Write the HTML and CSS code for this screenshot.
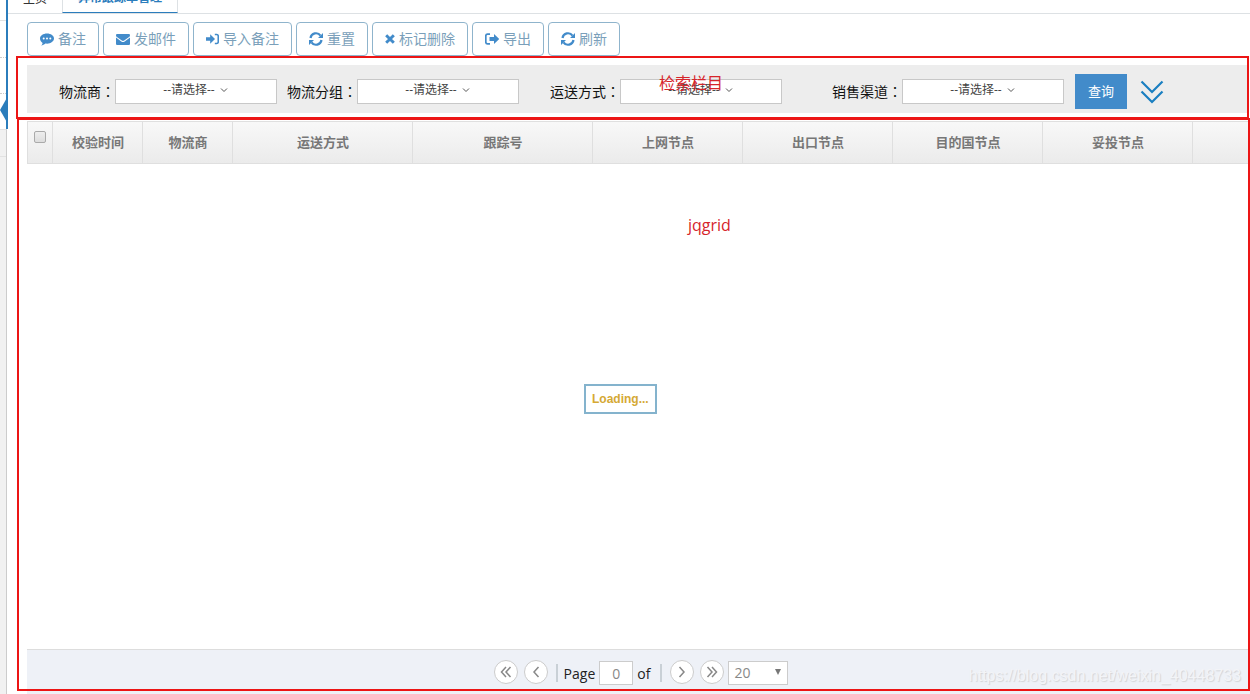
FILE: index.html
```html
<!DOCTYPE html>
<html lang="zh-CN">
<head>
<meta charset="utf-8">
<title>异常跟踪单管理</title>
<link rel="stylesheet" href="styles.css">
</head>
<body>
<aside class="sidebar">
  <div class="side-active">
    <div class="side-row"></div>
    <div class="side-row dotted"></div>
    <div class="side-row dotted"></div>
    <svg class="side-arrow" width="8" height="28" viewBox="0 0 8 28"><path d="M8 0L0 14l8 14z" fill="#2b7dbc"/></svg>
  </div>
  <div class="side-rest"><div class="side-row"></div></div>
</aside>
<main class="main">
  <nav class="tabs">
    <a class="tab" href="#">主页</a>
    <a class="tab active" href="#">异常跟踪单管理</a>
  </nav>
  <div class="toolbar">
    <button class="tool"><svg width="14" height="14" viewBox="0 0 14 14"><path fill="currentColor" d="M7 1.500c3.900 0 7 2.300 7 5.100s-3.100 5.100-7 5.100c-.6 0-1.100 0-1.600-.1C4.200 12.700 2.800 13.400 1.200 13.600c.8-.8 1.300-1.600 1.400-2.700C1 9.900 0 8.400 0 6.600 0 3.800 3.100 1.500 7 1.500z"/><g fill="#fff"><circle cx="3.700" cy="6.600" r="1"/><circle cx="7" cy="6.600" r="1"/><circle cx="10.300" cy="6.600" r="1"/></g></svg><span>备注</span></button>
    <button class="tool"><svg width="14" height="14" viewBox="0 0 14 14"><path fill="currentColor" d="M0 3.200C0 2.500.6 2 1.300 2h11.400c.7 0 1.300.5 1.300 1.200 0 .9-.6 1.600-1.300 2.100L8.200 8.500c-.8.5-1.600.5-2.400 0L1.300 5.300C.6 4.800 0 4.100 0 3.200zM0 5.500l5.300 3.900c1.100.7 2.300.7 3.400 0L14 5.500v6.200c0 .7-.6 1.300-1.300 1.300H1.300C.6 13 0 12.400 0 11.700z"/></svg><span>发邮件</span></button>
    <button class="tool"><svg width="13" height="14" viewBox="0 0 14 14"><path fill="currentColor" d="M0 5h4.500V2l5.200 5-5.200 5V9H0z"/><path fill="none" stroke="currentColor" stroke-width="1.700" d="M9.500 2.200h2c1 0 1.700.7 1.700 1.700v6.200c0 1-.7 1.700-1.700 1.700h-2"/></svg><span>导入备注</span></button>
    <button class="tool"><svg width="14" height="14" viewBox="0 0 14 14"><g fill="none" stroke="currentColor" stroke-width="2.200"><path d="M1.500 6A5.500 5.500 0 0 1 11.500 3.700M12.500 8A5.500 5.500 0 0 1 2.500 10.300"/></g><path fill="currentColor" d="M14 1v5H9zM0 13V8h5z"/></svg><span>重置</span></button>
    <button class="tool"><svg width="10" height="14" viewBox="0 1 11 12"><path fill="none" stroke="currentColor" stroke-width="3.200" d="M1.300 2.800l8.400 8.400M9.700 2.800l-8.400 8.400"/></svg><span>标记删除</span></button>
    <button class="tool"><svg width="14" height="14" viewBox="0 0 14 14"><path fill="currentColor" d="M4.500 5H9V2l5.200 5L9 12V9H4.500z"/><path fill="none" stroke="currentColor" stroke-width="1.700" d="M5 2.200H2.500C1.500 2.200.8 2.900.8 3.900v6.200c0 1 .7 1.700 1.700 1.700H5"/></svg><span>导出</span></button>
    <button class="tool"><svg width="14" height="14" viewBox="0 0 14 14"><g fill="none" stroke="currentColor" stroke-width="2.200"><path d="M1.500 6A5.500 5.500 0 0 1 11.500 3.700M12.500 8A5.500 5.500 0 0 1 2.500 10.300"/></g><path fill="currentColor" d="M14 1v5H9zM0 13V8h5z"/></svg><span>刷新</span></button>
  </div>
  <form class="filters">
    <div class="field">
      <label for="carrier">物流商<span class="colon" lang="zh-TW">：</span></label>
      <div class="pick"><select id="carrier"><option>--请选择--</option></select><svg class="caret" width="8" height="5" viewBox="0 0 8 5"><path d="M1 .5l3 3 3-3"/></svg></div>
    </div>
    <div class="field">
      <label for="group">物流分组<span class="colon" lang="zh-TW">：</span></label>
      <div class="pick"><select id="group"><option>--请选择--</option></select><svg class="caret" width="8" height="5" viewBox="0 0 8 5"><path d="M1 .5l3 3 3-3"/></svg></div>
    </div>
    <div class="field method">
      <label for="method">运送方式<span class="colon" lang="zh-TW">：</span></label>
      <div class="pick"><select id="method"><option>--请选择--</option></select><svg class="caret" width="8" height="5" viewBox="0 0 8 5"><path d="M1 .5l3 3 3-3"/></svg></div>
    </div>
    <div class="field channel">
      <label for="channel">销售渠道<span class="colon" lang="zh-TW">：</span></label>
      <div class="pick"><select id="channel"><option>--请选择--</option></select><svg class="caret" width="8" height="5" viewBox="0 0 8 5"><path d="M1 .5l3 3 3-3"/></svg></div>
    </div>
    <button class="query" type="button">查询</button>
    <button class="more" type="button" aria-label="展开"><svg width="24" height="24" viewBox="0 0 24 24"><path fill="none" stroke="#1a7fc1" stroke-width="2.200" d="M1.500 1.500L12 12 22.500 1.500M1.500 11.500L12 22l10.500-10.500"/></svg></button>
  </form>
  <section class="grid">
    <table class="head">
      <colgroup><col class="c-check"><col class="c-s"><col class="c-s"><col class="c-l"><col class="c-l"><col class="c-m"><col class="c-m"><col class="c-m"><col class="c-m"><col></colgroup>
      <thead><tr>
        <th class="check"><input type="checkbox" aria-label="全选"></th>
        <th>校验时间</th><th>物流商</th><th>运送方式</th><th>跟踪号</th><th>上网节点</th><th>出口节点</th><th>目的国节点</th><th>妥投节点</th><th></th>
      </tr></thead>
    </table>
    <div class="rows"></div>
    <div class="loading">Loading...</div>
    <footer class="pager">
      <div class="pages">
        <button class="round" aria-label="First"><svg width="12" height="12" viewBox="0 0 12 12"><path d="M6 1L1.500 6 6 11M10.500 1L6 6l4.500 5"/></svg></button>
        <button class="round" aria-label="Previous"><svg width="12" height="12" viewBox="0 0 12 12"><path d="M8.500 1L4 6l4.500 5"/></svg></button>
        <span class="sep"></span>
        <label for="page">Page</label>
        <input id="page" class="page" type="text" value="0">
        <span class="of">of</span>
        <span class="sep"></span>
        <button class="round" aria-label="Next"><svg width="12" height="12" viewBox="0 0 12 12"><path d="M3.500 1L8 6l-4.500 5"/></svg></button>
        <button class="round" aria-label="Last"><svg width="12" height="12" viewBox="0 0 12 12"><path d="M1.500 1L6 6l-4.500 5M6 1l4.500 5L6 11"/></svg></button>
        <div class="size"><select aria-label="Rows"><option>20</option></select><svg width="6" height="6" viewBox="0 0 6 6"><path d="M0 0h6L3 6z" fill="#777"/></svg></div>
      </div>
    </footer>
  </section>
</main>
<div class="mark mark-search"><span>检索栏目</span></div>
<div class="mark mark-grid"><span>jqgrid</span></div>
<div class="watermark">https://blog.csdn.net/weixin_40448733</div>
</body>
</html>
```
FILE: styles.css
```css
* { box-sizing: border-box; }
body {
  margin: 0;
  height: 100vh;
  display: flex;
  position: relative;
  overflow: hidden;
  background: #fff;
  color: #222;
  font: 14px/20px "Open Sans", "Noto Sans CJK SC", sans-serif;
}
button, input, select { font: inherit; margin: 0; }
svg { display: block; }

.sidebar { width: 8px; flex: none; display: flex; flex-direction: column; }
.side-active { height: 129px; border-right: 2px solid #2b7dbc; position: relative; padding-bottom: 35px; display: flex; flex-direction: column; }
.side-active .side-row { height: 21px; border-bottom: 1px solid #e2e2e2; }
.side-active .dotted { flex: 1; border-bottom: 1px dotted #ccc; }
.side-arrow { position: absolute; left: 0; top: 96px; }
.side-rest { flex: 1; width: 7px; background: #f1f1f1; border-right: 1px solid #ccc; border-top: 1px solid #e2e2e2; }
.side-rest .side-row { height: 27px; border-bottom: 1px solid #e2e2e2; }

.main { flex: 1; min-width: 0; display: flex; flex-direction: column; }
.tabs { height: 14px; border-bottom: 1px solid #dde1e4; display: flex; align-items: flex-end; overflow: hidden; }
.tab { flex: none; padding: 0 15px 4px; font-size: 12px; line-height: 20px; color: #333; text-decoration: none; }
.tab.active { color: #2b7dbc; font-weight: bold; border: 1px solid #dde1e4; border-bottom: 1px solid #2b7dbc; }

.toolbar { display: flex; gap: 4px; padding: 8px 0 0 19px; }
.tool { display: flex; align-items: center; gap: 4px; height: 34px; padding: 0 12px; border: 1px solid #8fb4cc; border-radius: 4px; background: #fff; color: #7a9fba; white-space: nowrap; }
.tool svg { color: #428bca; flex: none; }

.filters { margin: 9px 3px 0 19px; height: 48px; padding: 5px 0 0 32px; background: #ededed; display: flex; align-items: center; }
.field { display: flex; align-items: center; margin-right: 10px; color: #111; white-space: nowrap; }
.colon { font-family: "Noto Sans CJK TC", sans-serif; }
.field.method { margin-left: 21px; }
.field.channel { margin-left: 40px; }
.pick { position: relative; width: 162px; }
.pick select { appearance: none; display: block; width: 100%; height: 25px; padding: 0 14px 4px 0; border: 1px solid #c8c8c8; border-radius: 0; background: #fff; color: #444; font-size: 12px; text-align: center; text-align-last: center; }
.caret { position: absolute; left: 105px; top: 9px; fill: none; stroke: #555; pointer-events: none; }
.query { flex: none; width: 52px; height: 35px; margin-left: 1px; padding: 0 0 2px; border: 0; background: #428bca; color: #fff; font-size: 13px; }
.more { flex: none; margin-left: 13px; padding: 0; border: 0; background: none; }

.grid { flex: 1; margin: 8px 0 0 19px; display: flex; flex-direction: column; position: relative; }
.head { width: 100%; table-layout: fixed; border-collapse: separate; border-spacing: 0; border: 1px solid #dfdfdf; border-width: 1px 0; background: linear-gradient(#f8f8f8, #ebebeb); }
.c-check { width: 26px; }
.c-s { width: 90px; }
.c-m { width: 150px; }
.c-l { width: 180px; }
.head th { height: 41px; padding: 0 0 2px 1px; border-right: 1px solid #dfdfdf; color: #777; font-size: 13px; font-weight: bold; }
.head th:last-child { border-right: 0; }
.head .check { border-left: 1px solid #dfdfdf; vertical-align: top; padding: 9px 0 0; }
.check input { appearance: none; display: block; width: 12px; height: 12px; margin: 0 auto; border: 1px solid #aaa; border-radius: 2px; background: linear-gradient(#eee, #ddd); }
.rows { flex: 1; }
.loading { position: absolute; left: 557px; top: 263px; padding: 3px 6px; border: 2px solid #84b3cd; background: #fff; color: #d5a934; font: bold 12px/20px "Liberation Sans", Arial, sans-serif; }

.pager { height: 45px; border-top: 1px solid #ddd; background: #eef1f7; display: flex; justify-content: center; padding: 10px 0 0 5px; }
.pages { display: flex; align-items: center; height: 26px; }
.pages label, .of { padding-top: 2px; }
.round { width: 24px; height: 24px; padding: 0; margin: 0 6px 2px 0; border: 1px solid #ccc; border-radius: 50%; background: #fff; display: flex; align-items: center; justify-content: center; flex: none; }
.round svg { fill: none; stroke: #888; stroke-width: 1.500; }
.sep { width: 2px; height: 18px; background: #c9d0d6; margin: 0 6px 0 2px; }
.page { width: 34px; height: 24px; margin: 0 4px; padding: 0; border: 1px solid #ccc; background: #fff; color: #888; text-align: center; }
.of { margin-right: 8px; }
.of + .sep { margin-right: 8px; }
.size { position: relative; width: 60px; margin-left: -2px; }
.size select { appearance: none; display: block; width: 100%; height: 24px; padding: 0 5px; border: 1px solid #ccc; border-radius: 0; background: #fff; color: #888; }
.size svg { position: absolute; right: 7px; top: 8px; pointer-events: none; }

.mark { position: absolute; border: 2px solid #ec1515; color: #d6252b; font-size: 16px; pointer-events: none; }
.mark span { position: absolute; white-space: nowrap; }
.mark-search { left: 16px; right: 1px; top: 56px; height: 63px; }
.mark-search span { left: 641px; top: 15px; }
.mark-grid { left: 17px; right: 0; top: 118px; bottom: 3px; }
.mark-grid span { left: 669px; top: 95px; }
.watermark { position: absolute; right: 9px; bottom: 8px; color: #f3f4f7; text-shadow: 1px 1px 1px #d2d3d6; font: 16px/20px "Liberation Sans", Arial, sans-serif; }
```
